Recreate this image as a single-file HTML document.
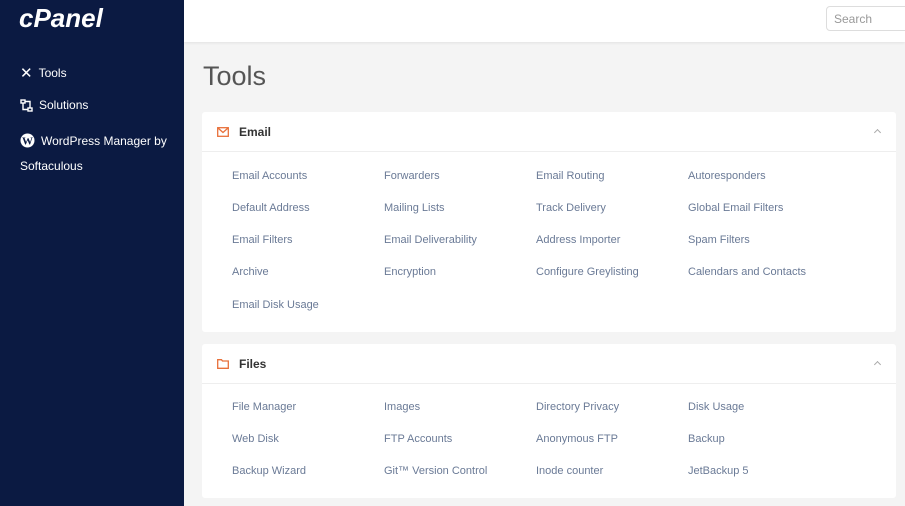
<!DOCTYPE html>
<html><head><style>
*{margin:0;padding:0;box-sizing:border-box}
body{width:905px;height:506px;overflow:hidden;background:#f4f4f4;font-family:"Liberation Sans",sans-serif;position:relative}
.sb{position:absolute;left:0;top:0;width:184px;height:506px;background:#0b1a42;color:#fff}
.logo{position:absolute;left:19px;top:3px;font-size:26px;font-weight:bold;font-style:italic;letter-spacing:0px}
.nav{position:absolute;left:20px;font-size:12px;display:flex;align-items:center;gap:6px}
.hdr{position:absolute;left:184px;top:0;right:0;height:42px;background:#fff;box-shadow:0 1px 3px rgba(0,0,0,.08)}
.search{position:absolute;left:826px;top:6px;width:90px;height:25px;border:1px solid #ddd;border-radius:4px;color:#999;font-size:12px;padding:5px 7px}
h1{position:absolute;left:203px;top:61px;font-weight:normal;font-size:27px;color:#555}
.card{position:absolute;left:202px;width:694px;background:#fff;border-radius:3px}
.ch{height:40px;border-bottom:1px solid #eee;display:flex;align-items:center;padding-left:15px;font-size:12px;font-weight:bold;color:#333;position:relative}
.ch svg{margin-right:10px}
.car{position:absolute;right:16px;top:18px;width:5px;height:5px;border-left:1.3px solid #aaa;border-top:1.3px solid #aaa;transform:rotate(45deg)}
.l{position:absolute;font-size:11px;color:#6a7a96}
</style></head><body>
<div class="sb">
<div class="logo">cPanel</div>
<div class="nav" style="top:64px"><span style="font-size:15px">✕</span>Tools</div>
<div class="nav" style="top:98px"><svg width="13" height="13" viewBox="0 0 13 13"><rect x="1" y="1" width="4" height="3" fill="none" stroke="#fff" stroke-width="1.4"/><rect x="8" y="9" width="4" height="3" fill="none" stroke="#fff" stroke-width="1.4"/><path d="M5 2.5H10V9M3 4V10.5H8" stroke="#fff" stroke-width="1.4" fill="none"/></svg>Solutions</div>
<div class="nav" style="top:133px"><svg width="15" height="15" viewBox="0 0 15 15"><circle cx="7.5" cy="7.5" r="7" fill="#fff"/><text x="7.5" y="11.5" font-size="11" font-weight="bold" text-anchor="middle" fill="#0b1a42" font-family="Liberation Serif">W</text></svg>WordPress Manager by</div>
<div class="nav" style="top:159px">Softaculous</div>
</div>
<div class="hdr"></div>
<div class="search">Search</div>
<h1>Tools</h1>
<div class="card" style="top:112px;height:220px">
<div class="ch"><svg width="12" height="10" viewBox="0 0 12 10"><rect x=".7" y=".7" width="10.6" height="8.6" fill="none" stroke="#e8703a" stroke-width="1.3"/><path d="M1 1L6 5.5L11 1" fill="none" stroke="#e8703a" stroke-width="1.3"/></svg>Email<div class="car"></div></div>
</div>
<div class="card" style="top:344px;height:154px">
<div class="ch"><svg width="12" height="10" viewBox="0 0 12 10"><path d="M.7 .7H4.5L5.5 2H11.3V9.3H.7Z" fill="none" stroke="#e8703a" stroke-width="1.3"/></svg>Files<div class="car"></div></div>
</div>
<div class="l" style="left:232px;top:170px">Email Accounts</div>
<div class="l" style="left:384px;top:170px">Forwarders</div>
<div class="l" style="left:536px;top:170px">Email Routing</div>
<div class="l" style="left:688px;top:170px">Autoresponders</div>
<div class="l" style="left:232px;top:202px">Default Address</div>
<div class="l" style="left:384px;top:202px">Mailing Lists</div>
<div class="l" style="left:536px;top:202px">Track Delivery</div>
<div class="l" style="left:688px;top:202px">Global Email Filters</div>
<div class="l" style="left:232px;top:234px">Email Filters</div>
<div class="l" style="left:384px;top:234px">Email Deliverability</div>
<div class="l" style="left:536px;top:234px">Address Importer</div>
<div class="l" style="left:688px;top:234px">Spam Filters</div>
<div class="l" style="left:232px;top:266px">Archive</div>
<div class="l" style="left:384px;top:266px">Encryption</div>
<div class="l" style="left:536px;top:266px">Configure Greylisting</div>
<div class="l" style="left:688px;top:266px">Calendars and Contacts</div>
<div class="l" style="left:232px;top:299px">Email Disk Usage</div>
<div class="l" style="left:232px;top:401px">File Manager</div>
<div class="l" style="left:384px;top:401px">Images</div>
<div class="l" style="left:536px;top:401px">Directory Privacy</div>
<div class="l" style="left:688px;top:401px">Disk Usage</div>
<div class="l" style="left:232px;top:433px">Web Disk</div>
<div class="l" style="left:384px;top:433px">FTP Accounts</div>
<div class="l" style="left:536px;top:433px">Anonymous FTP</div>
<div class="l" style="left:688px;top:433px">Backup</div>
<div class="l" style="left:232px;top:465px">Backup Wizard</div>
<div class="l" style="left:384px;top:465px">Git™ Version Control</div>
<div class="l" style="left:536px;top:465px">Inode counter</div>
<div class="l" style="left:688px;top:465px">JetBackup 5</div>
</body></html>
